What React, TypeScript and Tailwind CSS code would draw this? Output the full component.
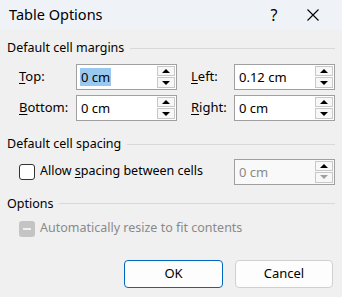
import { ReactNode } from 'react'

const FONT = '"Noto Sans", "Open Sans", sans-serif'

function Spinner({ disabled }: { disabled?: boolean }) {
  return (
    <div className="flex flex-col w-[19px] gap-px py-px pr-px">
      <div className="flex-1 flex items-center justify-center border border-[#c8c8c8] bg-[#f7f7f7]">
        <svg width="8" height="4" viewBox="0 0 8 4"><path d="M0 4 L4 0 L8 4 Z" fill="#000" /></svg>
      </div>
      <div className="flex-1 flex items-center justify-center border border-[#c8c8c8] bg-[#f7f7f7]">
        <svg width="8" height="4" viewBox="0 0 8 4"><path d="M0 0 L8 0 L4 4 Z" fill={disabled ? '#a0a0a0' : '#000'} /></svg>
      </div>
    </div>
  )
}

function SpinBox({ value, selected, disabled }: { value: string; selected?: boolean; disabled?: boolean }) {
  return (
    <div
      className={`flex h-[26px] w-[101px] border border-[#a0a0a0] ${disabled ? 'bg-[#f9f9f9]' : 'bg-white'}`}
    >
      <div className="flex-1 flex items-center pl-[3px]">
        <span
          className={`px-px leading-[18px] text-[13px] ${
            selected ? 'bg-[#99c9ef]' : ''
          } ${disabled ? 'text-[#8a8a8a]' : 'text-black'}`}
        >
          {value}
        </span>
      </div>
      <Spinner disabled={disabled} />
    </div>
  )
}

function Label({ k, rest, w }: { k: string; rest: string; w: string }) {
  return (
    <span className={`${w} text-[13px] text-black`}>
      <span className="underline underline-offset-2">{k}</span>
      {rest}
    </span>
  )
}

function Group({ title }: { title: string; children?: ReactNode }) {
  return (
    <div className="flex items-center gap-[6px]">
      <span className="text-[12.5px] text-black whitespace-nowrap">{title}</span>
      <div className="flex-1 h-px bg-[#d9d9d9]" />
    </div>
  )
}

export default function App() {
  return (
    <div className="w-[342px] h-[297px] bg-[#f0f0f0] flex flex-col overflow-hidden" style={{ fontFamily: FONT }}>
      {/* title bar */}
      <div className="h-[29px] bg-[#eff3f8] flex items-center pl-[9px]">
        <span className="flex-1 text-[14.5px] text-black">Table Options</span>
        <span className="w-[20px] text-[16px] text-center text-black">?</span>
        <div className="w-[58px] flex justify-center">
          <svg width="12" height="12" viewBox="0 0 12 12">
            <path d="M0.5 0.5 L11.5 11.5 M11.5 0.5 L0.5 11.5" stroke="#000" strokeWidth="1.1" />
          </svg>
        </div>
      </div>

      <div className="flex flex-col pl-[7px] pr-[7px]">
        <div className="mt-[10px]">
          <Group title="Default cell margins" />
        </div>

        <div className="mt-[6px] pl-[12px] flex flex-col gap-[5px]">
          <div className="flex items-center">
            <Label k="T" rest="op:" w="w-[57px]" />
            <SpinBox value="0 cm" selected />
            <span className="w-[14px]" />
            <Label k="L" rest="eft:" w="w-[43px]" />
            <SpinBox value="0.12 cm" />
          </div>
          <div className="flex items-center">
            <Label k="B" rest="ottom:" w="w-[57px]" />
            <SpinBox value="0 cm" />
            <span className="w-[14px]" />
            <Label k="R" rest="ight:" w="w-[43px]" />
            <SpinBox value="0 cm" />
          </div>
        </div>

        <div className="mt-[14px]">
          <Group title="Default cell spacing" />
        </div>

        <div className="mt-[5px] pl-[12px] flex items-center">
          <div className="w-[16px] h-[16px] rounded-[3px] border border-[#333] bg-white" />
          <span className="ml-[5px] flex-1 text-[12.5px] text-black">
            Allow <span className="underline underline-offset-2">s</span>pacing between cells
          </span>
          <SpinBox value="0 cm" disabled />
        </div>

        <div className="mt-[10px]">
          <Group title="Options" />
        </div>

        <div className="mt-[6px] pl-[12px] flex items-center">
          <div className="w-[16px] h-[16px] rounded-[3px] bg-[#c4c4c4] flex items-center justify-center">
            <div className="w-[8px] h-[2px] bg-[#f0f0f0]" />
          </div>
          <span className="ml-[5px] text-[12.5px] text-[#8a8a8a]">Automatically resize to fit contents</span>
        </div>

        <div className="mt-[22px] flex justify-end gap-[12px] pr-[2px]">
          <button className="w-[99px] h-[28px] rounded-[4px] border border-[#0067c0] bg-[#fdfdfd] text-[13px] text-black">
            OK
          </button>
          <button className="w-[98px] h-[28px] rounded-[4px] border border-[#d0d0d0] bg-[#fdfdfd] text-[13px] text-black">
            Cancel
          </button>
        </div>
      </div>
    </div>
  )
}
